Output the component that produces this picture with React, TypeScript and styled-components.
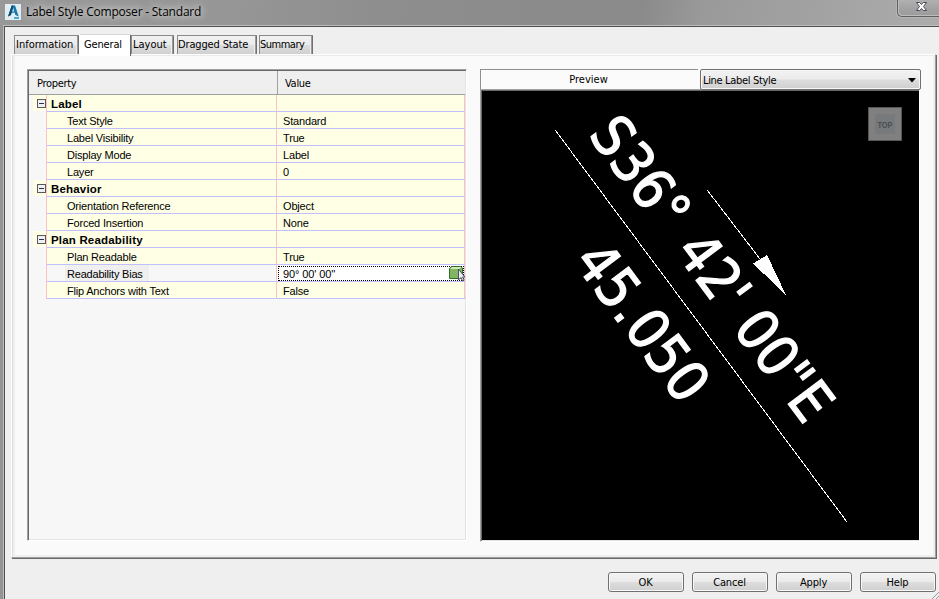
import React from "react";
import styled, { createGlobalStyle } from "styled-components";

const GlobalStyle = createGlobalStyle`
  * { box-sizing: border-box; }
  body { margin: 0; background: #efefef; overflow: hidden; }
`;

const tahoma = `"DejaVu Sans Condensed", "DejaVu Sans", sans-serif`;

const Window = styled.div`
  width: 939px;
  height: 599px;
  display: flex;
  flex-direction: column;
  background: #efefef;
  font: 11px/14px ${tahoma};
  font-stretch: condensed;
  color: #000;
  overflow: hidden;
`;

const TitleBar = styled.header`
  height: 25px;
  flex: none;
  display: flex;
  align-items: flex-start;
  padding-left: 5px;
  background: linear-gradient(100deg, #989898 0, #969696 25%, #8e8e8e 40%, #8a8a8a 68%, #9a9a9a 75%, #a0a0a0 84%, #acacac 100%);
`;

const TitleText = styled.h1`
  margin: 3px 0 0 5px;
  flex: 1;
  font: 12px/18px "Open Sans", "Noto Sans", sans-serif;
  letter-spacing: -0.22px;
  white-space: nowrap;
  text-shadow: 0 0 7px #ccc, 0 0 7px #ccc, 0 0 10px #c4c4c4;
`;

const CloseButton = styled.button`
  width: 42px;
  height: 17px;
  padding: 0 0 0 5px;
  border: 1px solid #5f5f5f;
  border-width: 0 0 1px 1px;
  border-radius: 0 0 0 5px;
  background: linear-gradient(#b0b0b0, #a2a2a2 55%, #9b9b9b);
  box-shadow: inset 1px -1px 0 #bcbcbc, -1px 1px 0 #b5b5b5;
  display: flex;
  justify-content: center;
`;

const CloseGlyph = styled.svg`
  margin-top: 0;
`;

const Frame = styled.div`
  flex: 1;
  display: flex;
  flex-direction: column;
  padding: 7px 2px 0 6px;
  border-left: 3px solid #949494;
  box-shadow: inset 1px 1px 0 #bdbdbd, inset 2px 2px 0 #505050;
`;

const TabStrip = styled.nav`
  display: flex;
  align-items: flex-end;
  height: 22px;
  padding-left: 5px;
  flex: none;
`;

const Tab = styled.button<{ $w: number; $gap: number; $active?: boolean; $ls: number; $inset?: number }>`
  position: relative;
  width: ${(p) => p.$w}px;
  height: ${(p) => (p.$active ? 22 : 19)}px;
  margin: 0 ${(p) => p.$gap}px ${(p) => (p.$active ? -2 : 0)}px 0;
  padding: 0 0 ${(p) => (p.$active ? 1 : 0)}px ${(p) => p.$inset ?? 0}px;
  border: 0 solid;
  border-width: 1px 0 0 1px;
  border-color: ${(p) => (p.$active ? "#d8d8d8 #777 #fff #fff" : "#8a8a8a")};
  background: ${(p) => (p.$active ? "#fff" : "linear-gradient(#f2f2f2, #ebebeb 48%, #dddddd 52%, #d0d0d0)")};
  box-shadow: ${(p) => (p.$active ? "inset -1px 0 0 #696969" : "inset -1px 0 0 #707070, inset -2px 0 0 #9b9b9b, inset -3px 0 0 #eee")};
  font: inherit;
  letter-spacing: ${(p) => p.$ls}px;
  text-align: left;
  white-space: nowrap;
`;

const TabPage = styled.main`
  width: 925px;
  height: 504px;
  margin-left: 2px;
  flex: none;
  display: flex;
  gap: 13px;
  padding: 13px 14px 0 12px;
  border: 1px solid;
  border-color: #fff #a0a0a0 #a0a0a0 #fff;
  background: linear-gradient(#fafafa, #fafafa) 3px 0 / 918px 500px no-repeat, #efefef;
  box-shadow: inset 1px 0 0 #dedede, inset 0 1px 0 #eaeaea, 1px 1px 0 #696969;
`;

const PropertyTable = styled.section`
  width: 440px;
  height: 472px;
  margin: 1px 0 0 3px;
  border: 1px solid #a0a0a0;
  border-right-color: #fff;
  border-bottom-color: #fff;
  background: #f7f7f7;
  box-shadow: inset 1px 1px 0 #696969, inset -1px -1px 0 #e3e3e3;
  padding: 1px;
  font-family: "Liberation Sans", Arial, sans-serif;
  font-size: 11px;
`;

const HeaderRow = styled.div`
  display: grid;
  grid-template-columns: 248px 188px;
  height: 24px;
  background: #efefef;
  border-bottom: 1px solid #a0a0a0;
`;

const HeaderCell = styled.div`
  padding: 6px 0 0 8px;
  font: 11px/14px ${tahoma};
  font-stretch: condensed;
  letter-spacing: -0.3px;
  & + & { border-left: 1px solid #a0a0a0; padding-left: 7px; }
`;

const Row = styled.div`
  display: grid;
  grid-template-columns: 17px 230px 189px;
  grid-template-rows: 17px;
  height: 17px;
  line-height: 16px;
`;

const Gutter = styled.div<{ $group: boolean }>`
  margin-left: 4px;
  padding: 4px 0 0 4px;
  height: 16px;
  line-height: 0;
  background: ${(p) => (p.$group ? "#ffffe6" : "#f7f7f7")};
`;

const NameCell = styled.div<{ $group: boolean; $selected: boolean }>`
  display: flex;
  align-items: flex-start;
  height: 17px;
  padding-left: ${(p) => (p.$group ? 4 : 18)}px;
  border-left: 1px solid #ffc0c0;
  border-bottom: 1px solid #c0c0ff;
  background: ${(p) => (p.$selected ? "#f7f7f7" : "#ffffe6")};
  font-weight: ${(p) => (p.$group ? 700 : 400)};
  font-size: ${(p) => (p.$group ? 11.5 : 11)}px;
  letter-spacing: ${(p) => (p.$group ? 0.18 : -0.2)}px;
  white-space: nowrap;
`;

const NameText = styled.span<{ $group: boolean; $selected: boolean }>`
  height: 16px;
  padding: 1px 6px 0 2px;
  margin-left: ${(p) => (p.$group ? -2 : 0)}px;
  background: ${(p) => (p.$selected ? "#efefef" : "transparent")};
`;

const ValueCell = styled.div<{ $selected: boolean }>`
  height: 17px;
  padding: ${(p) => (p.$selected ? "0 1px" : "1px 0 0 6px")};
  border-left: 1px solid #ffc0c0;
  border-bottom: 1px solid #c0c0ff;
  background: ${(p) => (p.$selected ? "#fff" : "#ffffe6")};
  box-shadow: inset -1px 0 0 #ffc0c0;
  letter-spacing: -0.17px;
  white-space: nowrap;
`;

const FocusField = styled.div`
  display: flex;
  justify-content: space-between;
  height: 15px;
  margin-top: 1px;
  padding-left: 4px;
  border: 1px dotted #000;
  line-height: 15px;
  letter-spacing: -0.1px;
`;

const PreviewPane = styled.section`
  width: 441px;
  margin-top: 1px;
`;

const PreviewBar = styled.div`
  display: flex;
  height: 20px;
`;

const PreviewLabel = styled.div`
  width: 218px;
  height: 20px;
  margin-right: 2px;
  padding-right: 2px;
  border: solid #8f8f8f;
  border-width: 1px 0 0 1px;
  background: #fbfbfb;
  text-align: center;
  line-height: 19px;
`;

const ComboBox = styled.button`
  width: 221px;
  height: 21px;
  display: flex;
  justify-content: space-between;
  align-items: center;
  padding: 2px 4px 0 2px;
  border: 1px solid #707070;
  border-radius: 2px;
  background: linear-gradient(#f2f2f2, #ebebeb 48%, #dddddd 52%, #cfcfcf);
  box-shadow: inset 0 0 0 1px #f8f8f8;
  font: inherit;
  letter-spacing: -0.33px;
`;

const Canvas = styled.div`
  width: 440px;
  height: 453px;
  border: 1px solid #a0a0a0;
  border-right-color: #fff;
  border-bottom-color: #fff;
  background: #000;
  box-shadow: inset 1px 1px 0 #696969, inset 0 -1px 0 #e3e3e3;
  svg { display: block; }
`;

const Footer = styled.footer`
  display: flex;
  justify-content: flex-end;
  gap: 8px;
  padding: 14px 1px 0 0;
`;

const PushButton = styled.button`
  width: 76px;
  height: 20px;
  padding: 1px 1px 0 0;
  border: 1px solid #707070;
  border-radius: 3px;
  background: linear-gradient(#f2f2f2, #ebebeb 48%, #dddddd 52%, #cfcfcf);
  box-shadow: inset 0 0 0 1px #f8f8f8;
  font: inherit;
  letter-spacing: -0.15px;
`;

const Grip = styled.svg`
  position: absolute;
  left: 931px;
  top: 591px;
`;

type Item = { name: string; value?: string; group?: boolean; selected?: boolean };

const items: Item[] = [
  { name: "Label", group: true },
  { name: "Text Style", value: "Standard" },
  { name: "Label Visibility", value: "True" },
  { name: "Display Mode", value: "Label" },
  { name: "Layer", value: "0" },
  { name: "Behavior", group: true },
  { name: "Orientation Reference", value: "Object" },
  { name: "Forced Insertion", value: "None" },
  { name: "Plan Readability", group: true },
  { name: "Plan Readable", value: "True" },
  { name: "Readability Bias", value: "90° 00' 00''", selected: true },
  { name: "Flip Anchors with Text", value: "False" },
];

const Logo = styled.svg`
  margin-top: 4px;
`;

const AppIcon = () => (
  <Logo width="16" height="16" viewBox="0 0 16 16">
    <rect width="16" height="16" fill="#e2edf2" />
    <path d="M3 12.5 6.7 1.5h3.4l3.6 11-3.3-1.6-.7-2.2H6.5L6 11z" fill="#1c78a8" />
    <path d="M7 7.5h2.3L8.2 3.7z" fill="#c8e4f2" />
    <path d="M3 12.5 6.7 1.5h1.8L6 11z" fill="#0e4e74" />
    <rect x="9" y="13" width="5" height="2" fill="#4ba8db" />
  </Logo>
);

const Minus = () => (
  <svg width="9" height="9" shapeRendering="crispEdges">
    <rect x=".5" y=".5" width="8" height="8" fill="#eef0f4" stroke="#5a5a5a" />
    <path d="M2 4.5h5" stroke="#303048" />
  </svg>
);

const MarkerSvg = styled.svg`
  flex: none;
  margin: -2px -2px 0 0;
`;

const EditMarker = () => (
  <MarkerSvg width="17" height="17" viewBox="0 0 17 17" overflow="visible">
    <path d="M3.5 1.5H12.5L14.5 3V12.5L12.5 13.5H1.5V3.5Z" fill="#83b464" stroke="#2c6e1c" />
    <path d="M2.5 4h9l2-2H4z" fill="#cdeab8" />
    <path d="M10.5 4v11l2.4-2.4 1.6 3.4 1.6-.8-1.5-3.2h2.2z" fill="#eee" stroke="#404058" strokeWidth=".9" />
  </MarkerSvg>
);

/* Advance widths (em) of the annotation lettering, scaled to the text height. */
const advance: Record<string, number> = {
  S: 0.557, E: 0.561, "°": 0.471, " ": 0.313, "'": 0.211, '"': 0.401, ".": 0.303,
};
const glyphX = (s: string, size: number) => {
  let x = 0;
  return [...s].map((c) => {
    const at = x;
    x += (advance[c] ?? 0.546) * size;
    return at.toFixed(1);
  }).join(" ");
};

const annotations = [
  { text: "S36° 42' 00\"E", x: 587.4, y: 134.8 },
  { text: "45.050", x: 572.6, y: 261.2 },
];

const Drawing = () => (
  <svg width="438" height="450" viewBox="481 90 438 450">
    <g stroke="#fff" shapeRendering="crispEdges">
      <path d="M555.5 130.5 847 522M707.5 190.5 760 259" />
    </g>
    <path d="M753 263.5 767 255 786 295z" fill="#fff" shapeRendering="crispEdges" />
    {annotations.map((a) => (
      <text
        key={a.text}
        transform={`translate(${a.x} ${a.y}) rotate(53.3)`}
        x={glyphX(a.text, 59.7)}
        fill="#fff"
        stroke="#fff"
        strokeWidth="1.2"
        fontSize="57"
        fontFamily={tahoma}
        fontStretch="condensed"
        xmlSpace="preserve"
      >
        {a.text}
      </text>
    ))}
    <g shapeRendering="crispEdges">
      <rect x="868.5" y="107.5" width="33" height="33" fill="#808080" stroke="#555" />
      <rect x="875" y="114" width="20" height="20" fill="#777a7c" />
    </g>
    <text x="877.5" y="127.5" fontSize="9.5" fontWeight="700" fontFamily="Liberation Sans, sans-serif" fill="#4a4d50" textLength="15" lengthAdjust="spacingAndGlyphs">TOP</text>
  </svg>
);

export default function App() {
  return (
    <Window>
      <GlobalStyle />
      <TitleBar>
        <AppIcon />
        <TitleText>Label Style Composer - Standard</TitleText>
        <CloseButton aria-label="Close">
          <CloseGlyph width="13" height="13" viewBox="0 0 13 13">
            <path d="M1.5 2.5h3.2l1.8 2 1.8-2h3.2L8.5 6.5l3 4H8.3l-1.8-2-1.8 2H1.5l3-4z" fill="#fff" stroke="#4a4c5c" />
          </CloseGlyph>
        </CloseButton>
      </TitleBar>
      <Frame>
        <TabStrip>
          <Tab $w={65} $gap={0} $ls={0} $inset={1}>Information</Tab>
          <Tab $w={52} $gap={0} $ls={-0.15} $inset={4} $active>General</Tab>
          <Tab $w={43} $gap={3} $ls={0} $inset={1}>Layout</Tab>
          <Tab $w={80} $gap={2} $ls={-0.15}>Dragged State</Tab>
          <Tab $w={54} $gap={0} $ls={-0.5}>Summary</Tab>
        </TabStrip>
        <TabPage>
          <PropertyTable>
            <HeaderRow>
              <HeaderCell>Property</HeaderCell>
              <HeaderCell>Value</HeaderCell>
            </HeaderRow>
            {items.map((it) => (
              <Row key={it.name}>
                <Gutter $group={!!it.group}>{it.group && <Minus />}</Gutter>
                <NameCell $group={!!it.group} $selected={!!it.selected}>
                  <NameText $group={!!it.group} $selected={!!it.selected}>{it.name}</NameText>
                </NameCell>
                <ValueCell $selected={!!it.selected}>
                  {it.selected ? <FocusField>{it.value}<EditMarker /></FocusField> : it.value}
                </ValueCell>
              </Row>
            ))}
          </PropertyTable>
          <PreviewPane>
            <PreviewBar>
              <PreviewLabel>Preview</PreviewLabel>
              <ComboBox>
                Line Label Style
                <svg width="8" height="5"><path d="M0 0h8L4 4.5z" /></svg>
              </ComboBox>
            </PreviewBar>
            <Canvas><Drawing /></Canvas>
          </PreviewPane>
        </TabPage>
        <Footer>
          <PushButton>OK</PushButton>
          <PushButton>Cancel</PushButton>
          <PushButton>Apply</PushButton>
          <PushButton>Help</PushButton>
        </Footer>
      </Frame>
      <Grip width="8" height="8"><path d="M8 1 1 8M8 5 5 8" stroke="#999" /></Grip>
    </Window>
  );
}
